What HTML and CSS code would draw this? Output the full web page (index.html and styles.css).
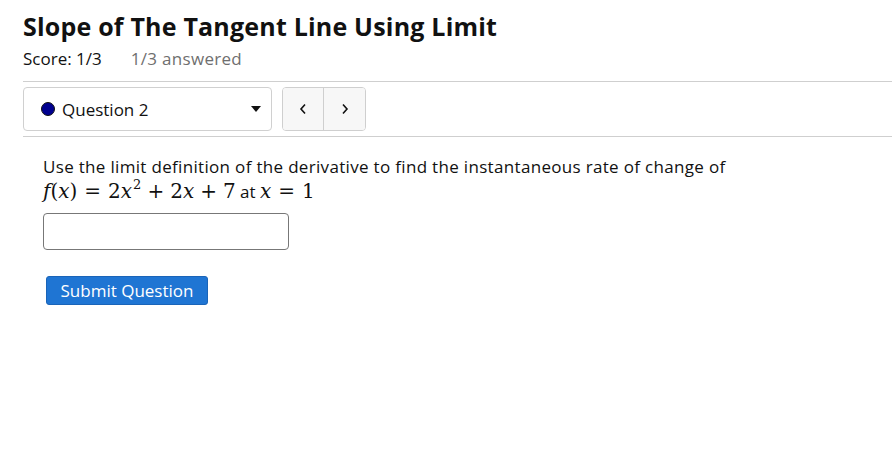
FILE: index.html
```html
<!DOCTYPE html>
<html>
<head>
<meta charset="utf-8">
<link rel="stylesheet" href="styles.css">
</head>
<body>
<div class="page">
  <h1 class="title">Slope of The Tangent Line Using Limit</h1>
  <div class="scoreline">
    <span class="score">Score: 1/3</span>
    <span class="answered">1/3 answered</span>
  </div>
  <div class="navbar">
    <div class="select">
      <span class="dot"></span>
      <span class="qlabel">Question 2</span>
      <span class="caret"></span>
    </div>
    <div class="arrows">
      <button class="arrow left"><svg width="8" height="12" viewBox="0 0 8 12"><path d="M6 1.5 L2 6 L6 10.5" fill="none" stroke="#111" stroke-width="1.6"/></svg></button>
      <button class="arrow right"><svg width="8" height="12" viewBox="0 0 8 12"><path d="M2 1.5 L6 6 L2 10.5" fill="none" stroke="#111" stroke-width="1.6"/></svg></button>
    </div>
  </div>
  <div class="question">
    <p class="prompt">Use the limit definition of the derivative to find the instantaneous rate of change of</p>
    <p class="mathline"><span class="math"><i>f</i>(<i>x</i>)<span class="rel">=</span>2<i>x</i><sup>2</sup><span class="bin">+</span>2<i>x</i><span class="bin">+</span>7</span> at <span class="math"><i>x</i><span class="rel">=</span>1</span></p>
    <input class="answer" type="text">
    <div class="submitrow"><button class="submit">Submit Question</button></div>
  </div>
</div>
</body>
</html>
```
FILE: styles.css
```css
html, body { margin: 0; padding: 0; background: #fff; }
body { font-family: "Open Sans", "Noto Sans", sans-serif; color: #111; }
.page { padding-left: 23px; padding-top: 10px; }
.title { margin: 0; font-size: 25px; font-weight: 700; line-height: 32px; color: #111; letter-spacing: 0.2px; }
.scoreline { margin-top: 6px; font-size: 17px; line-height: 22px; display: flex; gap: 29px; }
.score { color: #111; }
.answered { color: #6f6f6f; letter-spacing: 0.3px; }
.navbar { margin-top: 11px; border-top: 1px solid #cfcfcf; border-bottom: 1px solid #cfcfcf; padding: 5px 0 5px; display: flex; gap: 10px; }
.select { width: 247px; height: 42px; border: 1px solid #d0d0d0; border-radius: 4px; display: flex; align-items: center; box-sizing: content-box; }
.dot { width: 12px; height: 12px; border-radius: 50%; background: #00008f; border: 1.5px solid #111; margin-left: 17px; }
.qlabel { margin-left: 7px; font-size: 17px; flex: 1; }
.caret { width: 0; height: 0; border-left: 5px solid transparent; border-right: 5px solid transparent; border-top: 6px solid #111; margin-right: 10px; }
.arrows { display: flex; border: 1px solid #cfcfcf; border-radius: 4px; overflow: hidden; height: 42px; }
.arrow { width: 41px; height: 42px; background: #f7f7f7; border: 0; padding: 0; display: flex; align-items: center; justify-content: center; }
.arrow.left { border-right: 1px solid #cfcfcf; }
.question { padding-left: 20px; padding-top: 19px; }
.prompt { margin: 0; font-size: 17px; line-height: 22px; letter-spacing: 0.32px; }
.mathline { margin: 1px 0 0; font-size: 17px; line-height: 24px; }
.math { font-family: "DejaVu Serif", "Liberation Serif", serif; font-size: 20px; }
.math i { font-style: italic; }
.rel { margin: 0 7px; }
.bin { margin: 0 6px; }
sup { font-size: 13px; line-height: 0; vertical-align: 9px; margin-left: 1px; }
.answer { display: block; margin-top: 9px; width: 246px; height: 37px; box-sizing: border-box; border: 1px solid #777; border-radius: 4px; }
.submitrow { margin-top: 26px; padding-left: 3px; }
.submit { width: 162px; height: 29px; background: #1f75d3; color: #fff; border: 1px solid #1a64b8; border-radius: 3px; font-family: "Open Sans", sans-serif; font-size: 17px; padding: 0; }
```
